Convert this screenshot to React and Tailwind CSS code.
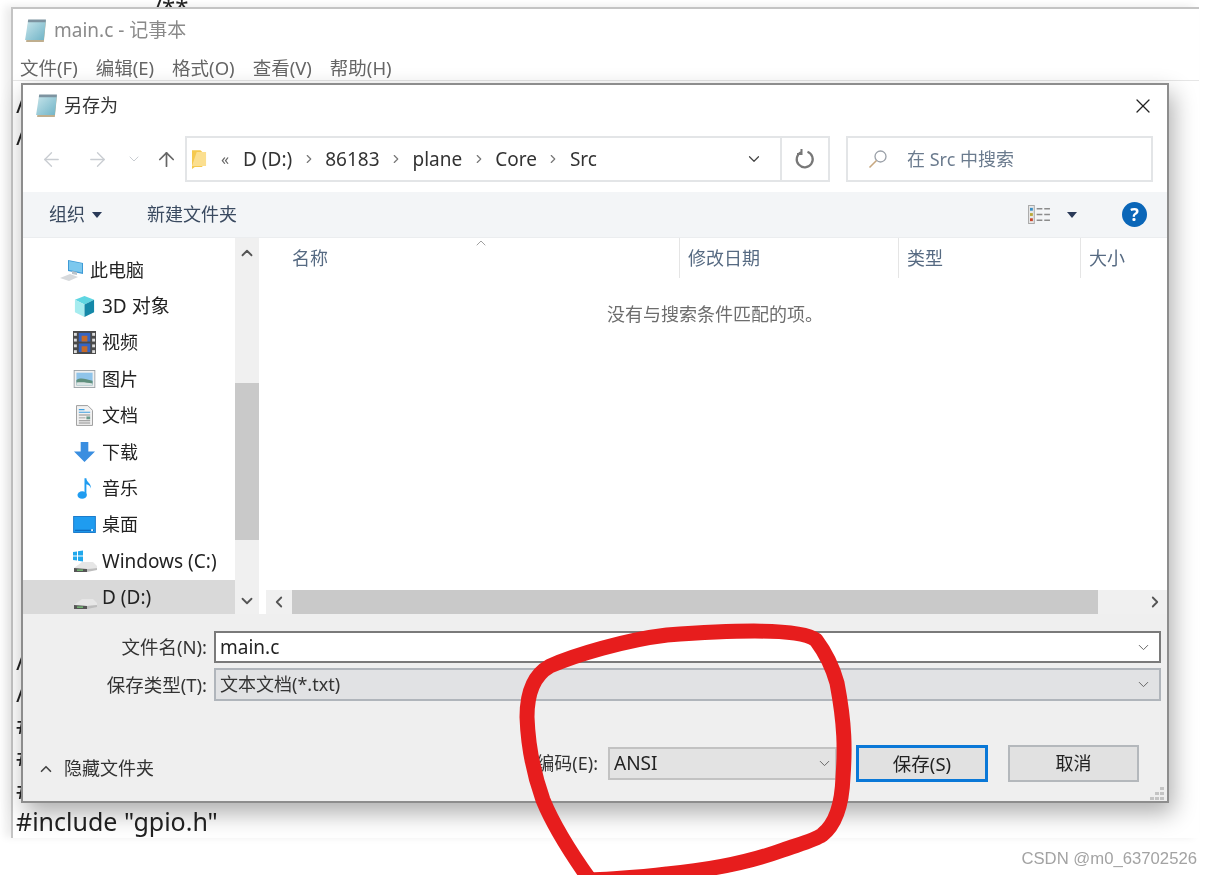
import React from 'react';
import { ChevronDown, ChevronUp, ChevronLeft, ChevronRight, ArrowLeft, ArrowRight, ArrowUp, X } from 'lucide-react';

const NotepadIcon = ({ className, id }) => (
  <svg viewBox="0 0 24 24" className={className}>
    <defs>
      <linearGradient id={id} x1="0" y1="0" x2="1" y2="1">
        <stop offset="0" stopColor="#c9e6ec" />
        <stop offset="1" stopColor="#6fb3c6" />
      </linearGradient>
    </defs>
    <path d="M5 3h17l-2 20H3z" fill="#bfae8e" />
    <path d="M5 2h17l-2 19H2z" fill={`url(#${id})`} />
    <path d="M5 1.500h17l-.3 2.500H4.600z" fill="#7d93a0" />
  </svg>
);

const FolderIcon = () => (
  <svg viewBox="0 0 16 22" className="w-[15px] h-[21px]">
    <path d="M0 1h9l2 2v16H3l-3 2z" fill="#f5c94f" />
    <path d="M5 3h10v15H0z" fill="#fbdf90" />
  </svg>
);

const RefreshIcon = () => (
  <svg viewBox="0 0 22 22" className="w-[22px] h-[22px]">
    <path d="M13.500 3.800A8 8 0 1 1 7 4.200" fill="none" stroke="#777" strokeWidth="2.200" />
    <path d="M7.500 1v5H3" fill="none" stroke="#777" strokeWidth="2" />
  </svg>
);

const PcIcon = () => (
  <svg viewBox="0 0 26 22" className="w-[26px] h-[22px]">
    <path d="M8 1l15 3v11L8 12z" fill="#3d9ad6" />
    <path d="M9 2l13 2.600v9L9 11z" fill="#7cc8ee" />
    <path d="M0 19l10-4 8 3-9 4z" fill="#d6d9dc" />
    <path d="M12 12l5 1v3l-5-1z" fill="#b9c3cb" />
  </svg>
);

const CubeIcon = () => (
  <svg viewBox="0 0 24 24" className="w-[23px] h-[23px]">
    <path d="M12 1l10 4-10 5L2 5z" fill="#5fd6e2" />
    <path d="M2 5l10 5v13L2 18z" fill="#a6ecef" />
    <path d="M22 5l-10 5v13l10-5z" fill="#1488a8" />
  </svg>
);

const FilmIcon = () => (
  <svg viewBox="0 0 24 24" className="w-[23px] h-[23px]">
    <rect x="0" y="0" width="24" height="24" fill="#4a4a4a" />
    <rect x="1" y="2" width="3" height="3" fill="#ddd" />
    <rect x="1" y="8" width="3" height="3" fill="#ddd" />
    <rect x="1" y="14" width="3" height="3" fill="#ddd" />
    <rect x="1" y="20" width="3" height="3" fill="#ddd" />
    <rect x="20" y="2" width="3" height="3" fill="#ddd" />
    <rect x="20" y="8" width="3" height="3" fill="#ddd" />
    <rect x="20" y="14" width="3" height="3" fill="#ddd" />
    <rect x="20" y="20" width="3" height="3" fill="#ddd" />
    <rect x="6" y="2" width="12" height="9" fill="#3565c4" />
    <rect x="6" y="13" width="12" height="9" fill="#3565c4" />
    <path d="M9 5h6v6H9zM9 16h6v6H9z" fill="#c56a2a" />
  </svg>
);

const PictureIcon = () => (
  <svg viewBox="0 0 24 20" className="w-[23px] h-[18px]">
    <rect x="0.500" y="0.500" width="23" height="19" fill="#f0f0f0" stroke="#9aa0a5" />
    <rect x="3" y="3" width="18" height="14" fill="#8fc4ea" />
    <path d="M3 11c5-3 10-1 18 1v5H3z" fill="#5f8f7d" />
    <path d="M3 14c6-1 12 0 18 1v2H3z" fill="#dbe4e4" />
  </svg>
);

const DocIcon = () => (
  <svg viewBox="0 0 18 22" className="w-[17px] h-[21px]">
    <path d="M.5.500h12l5 5v16H.5z" fill="#f1f1f1" stroke="#9a9a9a" />
    <path d="M3 4h6v1.500H3zM3 7h12v1H3z" fill="#3f9fe0" />
    <path d="M3 10h12v1H3zM3 13h7v1H3zM3 16h12v1H3zM3 18.500h12v1H3z" fill="#8d8d8d" />
    <rect x="11" y="12" width="4" height="3" fill="#6a9a8c" />
  </svg>
);

const DownloadIcon = () => (
  <svg viewBox="0 0 22 22" className="w-[21px] h-[21px]">
    <path d="M7 0h8v10h7L11 21 0 10h7z" fill="#3a8ee0" />
  </svg>
);

const MusicIcon = () => (
  <svg viewBox="0 0 16 24" className="w-[15px] h-[23px]">
    <ellipse cx="5.500" cy="19" rx="5" ry="4" fill="#1f9cf0" />
    <path d="M8 1h2c0 4 5 5 5 11-1-3-3-4-5-4.500V19H8z" fill="#1f9cf0" />
  </svg>
);

const DesktopIcon = () => (
  <svg viewBox="0 0 24 18" className="w-[23px] h-[17px]">
    <rect x="0.500" y="0.500" width="23" height="17" fill="#1f9cf0" stroke="#1878c8" />
    <rect x="2" y="14.500" width="20" height="1.500" fill="#0f6cc0" />
    <rect x="19" y="14" width="2" height="2" fill="#e8f4fc" />
  </svg>
);

const DriveShape = () => (
  <>
    <path d="M1 18l8-6h11l4 4v2l-10 1z" fill="#e6e6e6" />
    <path d="M1 18l13 1v3H1z" fill="#555" />
    <path d="M14 19l10-1v2l-10 2z" fill="#bdbdbd" />
    <rect x="4" y="19.500" width="6" height="1.300" fill="#78c878" />
  </>
);

const WinDriveIcon = () => (
  <svg viewBox="0 0 24 22" className="w-[24px] h-[22px]">
    <DriveShape />
    <path d="M0 2l4-.6v4H0zM5 1.200l5-.7v5H5zM0 6.500h4v4l-4-.6zM5 6.500h5v5l-5-.7z" fill="#20a8ec" />
  </svg>
);

const DriveIcon = () => (
  <svg viewBox="0 0 24 22" className="w-[24px] h-[22px]">
    <DriveShape />
  </svg>
);

const ViewIcon = () => (
  <svg viewBox="0 0 24 20" className="w-[23px] h-[19px]">
    <rect x="0.500" y="0.500" width="6" height="19" fill="#e9e9e9" stroke="#a5a5a5" />
    <rect x="2" y="3" width="3" height="3" fill="#3b8fc4" />
    <rect x="2" y="8.500" width="3" height="3" fill="#b8a93c" />
    <rect x="2" y="14" width="3" height="3" fill="#c8452c" />
    <path d="M9 4h6M17 4h6M9 10h6M17 10h6M9 16h6M17 16h6" stroke="#8c8c8c" strokeWidth="1.500" />
  </svg>
);

const Caret = ({ className }) => (
  <svg viewBox="0 0 10 6" className={className}>
    <path d="M0 0h10L5 6z" fill="#2a3a58" />
  </svg>
);

const places = [
  { label: '此电脑', icon: <PcIcon />, top: true },
  { label: '3D 对象', icon: <CubeIcon /> },
  { label: '视频', icon: <FilmIcon /> },
  { label: '图片', icon: <PictureIcon /> },
  { label: '文档', icon: <DocIcon /> },
  { label: '下载', icon: <DownloadIcon /> },
  { label: '音乐', icon: <MusicIcon /> },
  { label: '桌面', icon: <DesktopIcon /> },
  { label: 'Windows (C:)', icon: <WinDriveIcon /> },
  { label: 'D (D:)', icon: <DriveIcon />, active: true }
];

const crumbs = ['D (D:)', '86183', 'plane', 'Core', 'Src'];

const columns = [
  { label: '名称', width: 'w-[418px]', pad: 'pl-[30px]' },
  { label: '修改日期', width: 'w-[219px]', pad: 'pl-[8px]' },
  { label: '类型', width: 'w-[182px]', pad: 'pl-[8px]' },
  { label: '大小', width: 'flex-1', pad: 'pl-[8px]' }
];

const menus = ['文件(F)', '编辑(E)', '格式(O)', '查看(V)', '帮助(H)'];

function SaveDialog() {
  return (
    <div className="absolute left-[21px] top-[83px] w-[1148px] h-[720px] border-2 border-[#8d8d8d] bg-white shadow-[4px_10px_22px_rgba(0,0,0,0.32)] flex flex-col text-[18px] text-[#222]">
      {/* title bar */}
      <div className="h-[41px] flex items-center pl-[11px] pr-[12px]">
        <NotepadIcon id="pad-dialog" className="w-[25px] h-[25px]" />
        <span className="ml-[5px] text-[#333]">另存为</span>
        <X className="ml-auto w-[24px] h-[24px] text-[#222]" strokeWidth={1.3} />
      </div>

      {/* nav + address */}
      <div className="h-[66px] flex pt-[10px] pr-[14px] pl-[5px]">
        <div className="flex items-center h-[46px] text-[#c9cdd2]">
          <div className="w-[46px] flex justify-center"><ArrowLeft className="w-[23px] h-[23px]" strokeWidth={1.4} /></div>
          <div className="w-[46px] flex justify-center"><ArrowRight className="w-[23px] h-[23px]" strokeWidth={1.4} /></div>
          <div className="w-[28px] flex justify-center"><ChevronDown className="w-[16px] h-[16px]" strokeWidth={1.5} /></div>
          <div className="w-[37px] flex justify-center text-[#666]"><ArrowUp className="w-[23px] h-[23px]" strokeWidth={1.8} /></div>
        </div>
        <div className="w-[645px] h-[46px] border-2 border-[#e3e5e7] flex items-center">
          <div className="flex-1 flex items-center pl-[5px] text-[19px] text-[#333]">
            <FolderIcon />
            <span className="ml-[14px] w-[22px] text-[#666] text-[16px]">«</span>
            {crumbs.map((c, i) => (
              <React.Fragment key={c}>
                {i > 0 && <ChevronRight className="mx-[9.500px] w-[14px] h-[14px] text-[#777]" strokeWidth={2} />}
                <span>{c}</span>
              </React.Fragment>
            ))}
          </div>
          <ChevronDown className="w-[18px] h-[18px] mr-[17px] text-[#444]" strokeWidth={1.6} />
          <div className="w-[48px] h-full border-l-2 border-[#e3e5e7] flex items-center justify-center">
            <RefreshIcon />
          </div>
        </div>
        <div className="ml-[16px] flex-1 h-[46px] border-2 border-[#e3e5e7] flex items-center pl-[20px] text-[#6b7b8e]">
          <svg viewBox="0 0 20 20" className="w-[20px] h-[20px]">
            <circle cx="12.500" cy="7.500" r="5.500" fill="none" stroke="#9aa0a8" strokeWidth="1.300" />
            <path d="M8.500 11.500L1.500 18.500" stroke="#c8a880" strokeWidth="1.600" />
          </svg>
          <span className="ml-[19px]">在 Src 中搜索</span>
        </div>
      </div>

      {/* toolbar */}
      <div className="h-[46px] bg-[#f3f5f7] border-b border-[#ebedef] flex items-center pl-[26px] pr-[20px] text-[#3a4a60]">
        <span>组织</span>
        <Caret className="ml-[7px] w-[10px] h-[6px]" />
        <span className="ml-[45px]">新建文件夹</span>
        <div className="ml-auto"><ViewIcon /></div>
        <Caret className="ml-[16px] w-[10px] h-[6px]" />
        <div className="ml-[45px] w-[25px] h-[25px] rounded-full bg-[#0a66b8] text-white flex items-center justify-center text-[18px] font-bold">?</div>
      </div>

      {/* main */}
      <div className="h-[376px] flex overflow-hidden">
        <div className="w-[212px] pt-[14px] flex flex-col">
          {places.map((p) => (
            <div key={p.label} className={`h-[36.400px] flex items-center shrink-0 ${p.active ? 'bg-[#d9d9d9]' : ''}`}>
              <div className={`flex justify-center ${p.top ? 'ml-[32px] w-[35px]' : 'ml-[44px] w-[35px]'}`}>{p.icon}</div>
              <span className={p.label.includes('(') || p.label.startsWith('3D') ? 'text-[19px] text-[#222]' : 'text-[#222]'}>{p.label}</span>
            </div>
          ))}
        </div>
        <div className="w-[24px] bg-[#f0f0f0] flex flex-col items-center">
          <div className="h-[29px] flex items-center"><ChevronUp className="w-[18px] h-[18px] text-[#555]" strokeWidth={2.4} /></div>
          <div className="h-[116px] w-full shrink-0" />
          <div className="h-[157px] w-full shrink-0 bg-[#c9c9c9]" />
          <div className="flex-1 flex items-end pb-[4px]"><ChevronDown className="w-[18px] h-[18px] text-[#555]" strokeWidth={2.4} /></div>
        </div>
        <div className="flex-1 ml-[3px] flex flex-col relative">
          <div className="h-[40px] flex text-[#566a82]">
            {columns.map((c) => (
              <div key={c.label} className={`${c.width} ${c.pad} flex items-center border-r border-[#e5e5e5] last:border-r-0`}>{c.label}</div>
            ))}
          </div>
          <ChevronUp className="absolute left-[211px] top-[-3px] w-[16px] h-[16px] text-[#999]" strokeWidth={1.4} />
          <div className="flex-1 pt-[23px] pl-[345px] text-[#6d6d6d]">没有与搜索条件匹配的项。</div>
          <div className="h-[24px] ml-[4px] bg-[#f0f0f0] flex items-center">
            <div className="w-[26px] flex justify-center"><ChevronLeft className="w-[18px] h-[18px] text-[#555]" strokeWidth={2.4} /></div>
            <div className="w-[806px] h-full bg-[#c9c9c9]" />
            <div className="flex-1 flex justify-end pr-[3px]"><ChevronRight className="w-[18px] h-[18px] text-[#555]" strokeWidth={2.4} /></div>
          </div>
        </div>
      </div>

      {/* bottom form */}
      <div className="flex-1 bg-[#efefef] relative pt-[17px] pr-[6px]">
        <div className="flex items-center h-[32px]">
          <span className="w-[184px] text-right text-[18.500px] text-[#333]">文件名(N):</span>
          <div className="ml-[7px] flex-1 h-full bg-white border-2 border-[#7a7a7a] flex items-center pl-[4px] pr-[7px] text-[#222]">
            <span className="text-[19px]">main.c</span>
            <ChevronDown className="ml-auto w-[17px] h-[17px] text-[#666]" strokeWidth={1.4} />
          </div>
        </div>
        <div className="flex items-center h-[33px] mt-[5px]">
          <span className="w-[184px] text-right text-[18.500px] text-[#333]">保存类型(T):</span>
          <div className="ml-[7px] flex-1 h-full bg-[#e1e2e4] border-2 border-[#b0b5bb] flex items-center pl-[4px] pr-[7px] text-[#333]">
            <span>文本文档(*.txt)</span>
            <ChevronDown className="ml-auto w-[17px] h-[17px] text-[#666]" strokeWidth={1.4} />
          </div>
        </div>
        <div className="flex items-center h-[37px] mt-[44px] pl-[14px] pr-[22px]">
          <ChevronUp className="mt-[10px] w-[18px] h-[18px] text-[#444]" strokeWidth={2.2} />
          <span className="mt-[10px] ml-[9px] text-[#333]">隐藏文件夹</span>
          <span className="ml-auto text-[#333]">编码(E):</span>
          <div className="ml-[10px] w-[229px] h-[33px] bg-[#e3e3e3] border-2 border-[#c2c2c2] flex items-center pl-[4px] pr-[2px]">
            <span className="text-[19px] text-[#222]">ANSI</span>
            <ChevronDown className="ml-auto w-[17px] h-[17px] text-[#666]" strokeWidth={1.4} />
          </div>
          <button className="ml-[19px] w-[132px] h-[37px] bg-[#e1e1e1] border-[3px] border-[#0a78d7] text-[18.500px] text-[#222]">保存(S)</button>
          <button className="ml-[20px] w-[131px] h-[37px] bg-[#e1e1e1] border-2 border-[#b4b8bc] text-[#222]">取消</button>
        </div>
        {/* resize grip */}
        <svg viewBox="0 0 14 14" className="absolute right-[3px] bottom-[0px] w-[14px] h-[14px]">
          <path d="M10 0h4v3h-4zM5 5h4v3H5zM10 5h4v3h-4zM0 10h4v3H0zM5 10h4v3H5zM10 10h4v3h-4z" fill="#c4c4c4" />
        </svg>
      </div>
    </div>
  );
}

export default function App() {
  return (
    <div
      className="relative w-[1212px] h-[875px] bg-white overflow-hidden blur-[0.4px]"
      style={{ fontFamily: '"Noto Sans", "Noto Sans CJK SC", sans-serif' }}
    >
      <div className="h-[7px] overflow-hidden pl-[153px] text-[24px] leading-[14px] text-[#222]">/**</div>

      {/* notepad behind */}
      <div className="ml-[11px] w-[1188px] h-[831px] border-l-2 border-t-2 border-[#c4c4c4] shadow-[-6px_-1px_8px_rgba(0,0,0,0.08)] bg-white">
        <div className="h-[42px] flex items-center pl-[10px] text-[19px] text-[#8a8a8a]">
          <NotepadIcon id="pad-main" className="w-[25px] h-[25px]" />
          <span className="ml-[6px]">main.c - 记事本</span>
        </div>
        <div className="h-[30px] flex items-start gap-[18px] pl-[7px] text-[18.500px] text-[#666] border-b border-[#e6e6e6]">
          {menus.map((m) => (
            <span key={m} className="mt-[3px]">{m}</span>
          ))}
        </div>
        <div className="pl-[3px] text-[25px] text-[#222] leading-[32.300px]">
          <div className="pt-[6px]">
            <div>/</div>
            <div>/</div>
          </div>
          <div className="mt-[492px]">
            <div>/</div>
            <div>/</div>
            <div>#</div>
            <div>#</div>
            <div>#</div>
            <div>#include "gpio.h"</div>
          </div>
        </div>
      </div>

      <SaveDialog />

      {/* red marker circle */}
      <svg viewBox="0 0 1212 875" className="absolute inset-0 w-[1212px] h-[875px] pointer-events-none">
        <path
          d="M816 640C800 628 735 630 667 635C625 640 575 655 550 666C532 676 527 695 527 717C528 745 533 772 543 800C552 822 570 852 590 880C620 878 640 878 667 874C710 870 750 862 783 850C800 844 815 840 822 835C835 825 842 805 843 777C845 750 845 725 837 683C832 665 825 652 816 640Z"
          fill="none"
          stroke="#e71d1d"
          strokeWidth="15"
          strokeLinejoin="round"
        />
      </svg>

      <span className="absolute right-[15px] top-[846px] text-[16.700px] text-[#a3a3a3]" style={{ fontFamily: '"Liberation Sans", sans-serif' }}>
        CSDN @m0_63702526
      </span>
    </div>
  );
}
